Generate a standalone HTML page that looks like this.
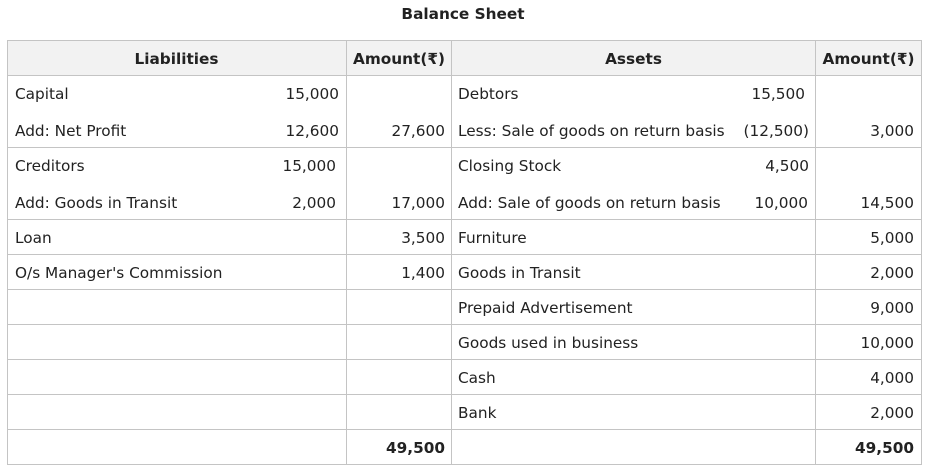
<!DOCTYPE html>
<html><head><meta charset="utf-8"><style>
body{margin:0;width:926px;height:474px;background:#fff;position:relative;overflow:hidden;font-family:"DejaVu Sans","Liberation Sans",sans-serif;font-size:15.3px;color:#222}
.t{position:absolute;height:20px;line-height:20px;white-space:nowrap;margin-top:1px}
.b{font-weight:bold}
.h{position:absolute;background:#c4c4c4;height:1px}
.v{position:absolute;background:#c4c4c4;width:1px}
</style></head><body>
<div class="t b" style="left:0;width:926px;text-align:center;top:3px">Balance Sheet</div>
<div style="position:absolute;left:7px;top:40px;width:914px;height:35px;background:#f2f2f2"></div>
<div class="h" style="left:7px;width:915px;top:40px"></div>
<div class="h" style="left:7px;width:915px;top:75px"></div>
<div class="h" style="left:7px;width:915px;top:147px"></div>
<div class="h" style="left:7px;width:915px;top:219px"></div>
<div class="h" style="left:7px;width:915px;top:254px"></div>
<div class="h" style="left:7px;width:915px;top:289px"></div>
<div class="h" style="left:7px;width:915px;top:324px"></div>
<div class="h" style="left:7px;width:915px;top:359px"></div>
<div class="h" style="left:7px;width:915px;top:394px"></div>
<div class="h" style="left:7px;width:915px;top:429px"></div>
<div class="h" style="left:7px;width:915px;top:464px"></div>
<div class="v" style="left:7px;top:40px;height:425px"></div>
<div class="v" style="left:346px;top:40px;height:425px"></div>
<div class="v" style="left:451px;top:40px;height:425px"></div>
<div class="v" style="left:815px;top:40px;height:425px"></div>
<div class="v" style="left:921px;top:40px;height:425px"></div>

<div class="t b" style="left:7px;width:339px;text-align:center;top:48px">Liabilities</div>
<div class="t b" style="left:347px;width:104px;text-align:center;top:48px">Amount(₹)</div>
<div class="t b" style="left:452px;width:363px;text-align:center;top:48px">Assets</div>
<div class="t b" style="left:816px;width:105px;text-align:center;top:48px">Amount(₹)</div>

<div class="t" style="left:15px;top:83px">Capital</div>
<div class="t" style="right:587px;top:83px">15,000</div>
<div class="t" style="left:15px;top:120px">Add: Net Profit</div>
<div class="t" style="right:587px;top:120px">12,600</div>
<div class="t" style="right:481px;top:120px">27,600</div>
<div class="t" style="left:458px;top:83px">Debtors</div>
<div class="t" style="right:121px;top:83px">15,500</div>
<div class="t" style="left:458px;top:120px">Less: Sale of goods on return basis</div>
<div class="t" style="right:117px;top:120px">(12,500)</div>
<div class="t" style="right:12px;top:120px">3,000</div>

<div class="t" style="left:15px;top:155px">Creditors</div>
<div class="t" style="right:590px;top:155px">15,000</div>
<div class="t" style="left:15px;top:192px">Add: Goods in Transit</div>
<div class="t" style="right:590px;top:192px">2,000</div>
<div class="t" style="right:481px;top:192px">17,000</div>
<div class="t" style="left:458px;top:155px">Closing Stock</div>
<div class="t" style="right:117px;top:155px">4,500</div>
<div class="t" style="left:458px;top:192px">Add: Sale of goods on return basis</div>
<div class="t" style="right:118px;top:192px">10,000</div>
<div class="t" style="right:12px;top:192px">14,500</div>

<div class="t" style="left:15px;top:227px">Loan</div>
<div class="t" style="right:481px;top:227px">3,500</div>
<div class="t" style="left:458px;top:227px">Furniture</div>
<div class="t" style="right:12px;top:227px">5,000</div>

<div class="t" style="left:15px;top:262px">O/s Manager's Commission</div>
<div class="t" style="right:481px;top:262px">1,400</div>
<div class="t" style="left:458px;top:262px">Goods in Transit</div>
<div class="t" style="right:12px;top:262px">2,000</div>

<div class="t" style="left:458px;top:297px">Prepaid Advertisement</div>
<div class="t" style="right:12px;top:297px">9,000</div>
<div class="t" style="left:458px;top:332px">Goods used in business</div>
<div class="t" style="right:12px;top:332px">10,000</div>
<div class="t" style="left:458px;top:367px">Cash</div>
<div class="t" style="right:12px;top:367px">4,000</div>
<div class="t" style="left:458px;top:402px">Bank</div>
<div class="t" style="right:12px;top:402px">2,000</div>

<div class="t b" style="right:481px;top:437px">49,500</div>
<div class="t b" style="right:12px;top:437px">49,500</div>
</body></html>
